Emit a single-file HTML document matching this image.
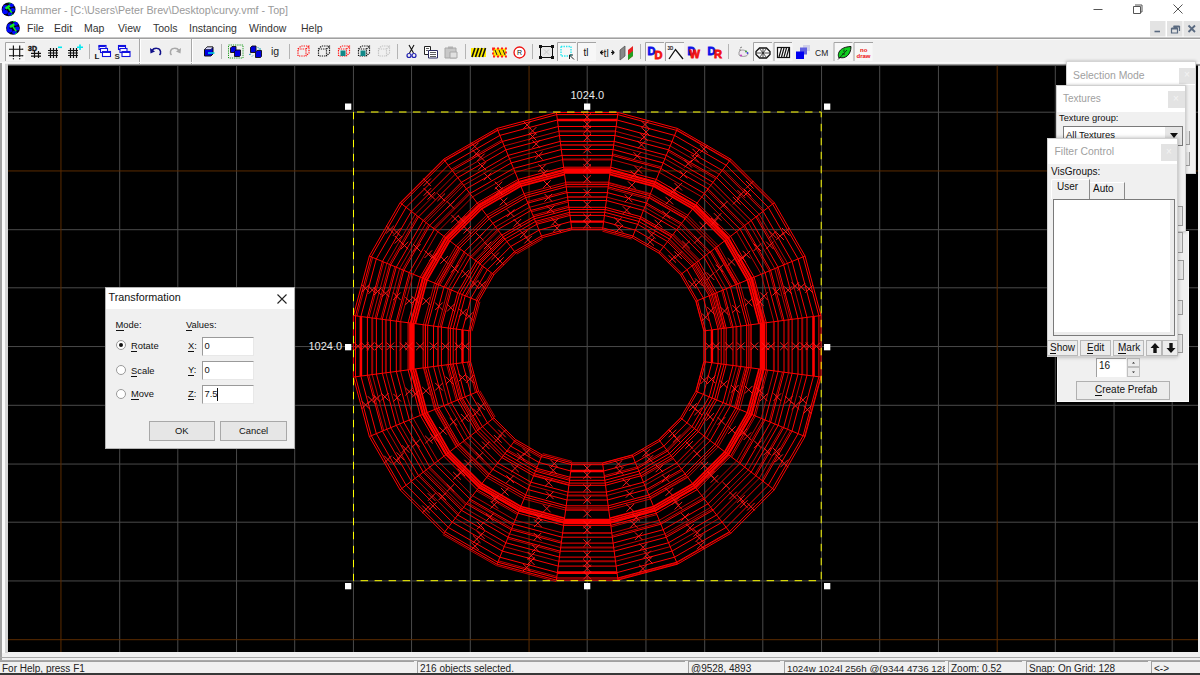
<!DOCTYPE html>
<html><head><meta charset="utf-8">
<style>
*{box-sizing:border-box}
html,body{margin:0;padding:0}
body{width:1200px;height:675px;overflow:hidden;position:relative;background:#f0f0f0;font-family:"Liberation Sans",sans-serif;}
.a{position:absolute}
.t{position:absolute;white-space:pre;line-height:1}
.btn{position:absolute;background:#e1e1e1;border:1px solid #adadad;}
.xb{position:absolute;background:#e3e3e3}
.sunk{position:absolute;border-top:1px solid #a0a0a0;border-left:1px solid #a0a0a0;border-right:1px solid #fff;border-bottom:1px solid #fff}
.pressed{position:absolute;background:#f7f7f7;border-top:1px solid #9a9a9a;border-left:1px solid #9a9a9a;}
.sep{position:absolute;top:44px;width:1px;height:17px;background:#a8a8a8;border-right:1px solid #fff}
.ic{position:absolute;top:43px}
.sb{position:absolute;top:661px;height:12px;padding-top:1px;border-top:1px solid #a0a0a0;border-left:1px solid #a0a0a0;font-size:10px;color:#222;padding-left:2px;line-height:11px;white-space:pre;overflow:hidden}
</style></head>
<body>
<!-- title bar -->
<div class="a" style="left:0;top:0;width:1200px;height:37px;background:#fff"></div>
<div class="a" style="left:0;top:37px;width:1200px;height:1px;background:#c8c8c8"></div>
<div class="a" style="left:0;top:38px;width:1200px;height:1px;background:#a0a0a0"></div>
<div class="a" style="left:0;top:39px;width:1200px;height:1px;background:#fbfbfb"></div>
<div class="t" style="left:20px;top:5px;font-size:10.7px;color:#9a9a9a">Hammer - [C:\Users\Peter Brev\Desktop\curvy.vmf - Top]</div>
<div class="t" style="left:27px;top:23px;font-size:10.5px;color:#333">File</div>
<div class="t" style="left:54px;top:23px;font-size:10.5px;color:#333">Edit</div>
<div class="t" style="left:84px;top:23px;font-size:10.5px;color:#333">Map</div>
<div class="t" style="left:118px;top:23px;font-size:10.5px;color:#333">View</div>
<div class="t" style="left:153px;top:23px;font-size:10.5px;color:#333">Tools</div>
<div class="t" style="left:189px;top:23px;font-size:10.5px;color:#333">Instancing</div>
<div class="t" style="left:249px;top:23px;font-size:10.5px;color:#333">Window</div>
<div class="t" style="left:301px;top:23px;font-size:10.5px;color:#333">Help</div>
<svg class="a" style="left:0;top:38px" width="900" height="27">
<g transform="translate(0,-38)">
<!-- pressed buttons -->
<g fill="#f8f8f8" stroke="#a6a6a6" stroke-width="1">
<path d="M5.5 61V42.5H25" fill="none"/>
</g>
<g fill="#f7f7f7">
<rect x="5" y="42" width="20" height="19"/>
<rect x="557" y="42" width="19" height="19"/><rect x="577" y="42" width="19" height="19"/>
<rect x="645" y="42" width="19" height="19"/><rect x="665" y="42" width="19" height="19"/>
<rect x="753" y="42" width="19" height="19"/><rect x="773.5" y="42" width="19" height="19"/>
<rect x="833.5" y="42" width="19" height="19"/><rect x="853.5" y="42" width="19" height="19"/>
</g>
<path fill="none" stroke="#a4a4a4" stroke-width="1" d="M5.5 61V42.5H25M557.5 61V42.5H576M577.5 61V42.5H596M645.5 61V42.5H664M665.5 61V42.5H684M753.5 61V42.5H772M774 61V42.5H792M834 61V42.5H852.5M854 61V42.5H873"/>
<!-- separators -->
<path fill="none" stroke="#b4b4b4" stroke-width="1" d="M89.5 44V59M221.5 44V59M289.5 44V59M397.5 44V59M465.5 44V59M532.5 44V59M640.5 44V59M728.5 44V59"/>
<path fill="none" stroke="#a8a8a8" stroke-width="1" d="M139.5 39V64M191.5 39V64"/>
<path fill="none" stroke="#ffffff" stroke-width="1" d="M140.5 39V64M192.5 39V64"/>
<!-- 1 grid -->
<g stroke="#111" stroke-width="1.15" fill="none"><path d="M13.4 45.5V57M19.7 45.5V57M9 49.2H23M9 55.7H23"/></g>
<g fill="#222"><circle cx="13.4" cy="58.7" r=".7"/><circle cx="19.7" cy="58.7" r=".7"/><circle cx="22.8" cy="49.2" r=".6"/><circle cx="22.8" cy="55.7" r=".6"/></g>
<!-- 2 3D grid -->
<text x="28" y="50.5" font-family="Liberation Sans" font-weight="bold" font-size="7" fill="#111" stroke="#111" stroke-width=".4">3D</text>
<g stroke="#111" stroke-width="1.2" fill="none"><path d="M34.5 51V58M38.5 51V58M31 53.3H41M31 56.2H41"/></g>
<!-- 3 grid- -->
<g stroke="#111" stroke-width="1.2" fill="none"><path d="M50.5 48V58M53.5 48V58M56.5 48V58M48 50.5H58M48 53H58M48 55.5H58"/></g>
<path d="M58 47.3H62" stroke="#00e8f0" stroke-width="1.6"/>
<!-- 4 grid+ -->
<g stroke="#111" stroke-width="1.2" fill="none"><path d="M70.5 48V58M73.5 48V58M76.5 48V58M68 50.5H78M68 53H78M68 55.5H78"/></g>
<path d="M77 47.3H83M80 44.5V50" stroke="#00e8f0" stroke-width="1.6"/>
<!-- 5 L stacks -->
<g fill="#fff" stroke="#1010e0" stroke-width="1.1">
<rect x="99" y="45.5" width="7" height="4"/><rect x="100.5" y="48.5" width="7" height="4"/><rect x="102.5" y="51.5" width="8" height="5"/></g>
<path d="M98.5 45.5h7v1.5h-7z M102 51.5h8v1.5h-8z" fill="#1010e0"/>
<text x="94.5" y="58.5" font-family="Liberation Sans" font-weight="bold" font-size="8" fill="#111">L</text>
<g fill="#fff" stroke="#1010e0" stroke-width="1.1">
<rect x="118.5" y="45.5" width="7" height="4"/><rect x="120" y="48.5" width="7" height="4"/><rect x="122" y="51.5" width="8" height="5"/></g>
<path d="M118.5 45.5h7v1.5h-7z M122 51.5h8v1.5h-8z" fill="#1010e0"/>
<text x="114.5" y="58.5" font-family="Liberation Sans" font-weight="bold" font-size="8" fill="#333">S</text>
<!-- undo redo -->
<path d="M152 50.5C154 47.5 160 47.5 160.5 51.5C161 53.5 160 54.5 159.5 55" fill="none" stroke="#10108a" stroke-width="1.5"/>
<path d="M150 48L150.5 53.5L155 51.5Z" fill="#10108a"/>
<path d="M179 50.5C177 47.5 171 47.5 170.5 51.5C170 53.5 171 54.5 171.5 55" fill="none" stroke="#a8a8a8" stroke-width="1.5"/>
<path d="M181 48L180.5 53.5L176 51.5Z" fill="#a8a8a8"/>
<!-- cube -->
<path d="M204.5 49.5L207 47H213L213 54L211 56H204.5Z" fill="#0000e0" stroke="#111" stroke-width="1"/>
<path d="M204.5 49.5L207 47H213L211 49.5Z" fill="#d8d8ff" stroke="#111" stroke-width=".6"/>
<path d="M208 53H214.5" stroke="#00d8e8" stroke-width="1.5"/>
<!-- group -->
<rect x="228.5" y="45" width="14.5" height="13" fill="none" stroke="#1a9a1a" stroke-width="1" stroke-dasharray="1.2 1"/>
<path d="M230.5 48L232 46.5H236V51.5L235 52.5H230.5Z" fill="#0000e0" stroke="#111" stroke-width=".9"/>
<path d="M234.5 51.5L236 50H240.5V55.5L239.5 56.5H234.5Z" fill="#0000e0" stroke="#111" stroke-width=".9"/>
<!-- ungroup -->
<path d="M250.5 47.5L252 46H256V51.5L255 52.5H250.5Z" fill="#0000e0" stroke="#111" stroke-width=".9"/>
<path d="M255.5 52L257 50.5H261.5V56.5L260.5 57.5H255.5Z" fill="#0000e0" stroke="#111" stroke-width=".9"/>
<path d="M257.5 48L258.5 47M258.5 49H261M249 54.5L251 54M252 56.5L253 55.5" stroke="#20a0b0" stroke-width="1"/>
<!-- ig -->
<text x="271" y="55" font-family="Liberation Sans" font-size="10.5" fill="#222">ig</text>
<!-- dotted cubes -->
<g fill="none" stroke-width="1.2" stroke-dasharray="1.3 1">
<path d="M298 49H306V56H298Z M298 49L301 46H309V53L306 56M306 49L309 46" stroke="#ff1010"/>
<path d="M318.5 49H326.5V56H318.5Z M318.5 49L321.5 46H329.5V53L326.5 56M326.5 49L329.5 46" stroke="#111"/>
<path d="M338.5 49H346.5V56H338.5Z M338.5 49L341.5 46H349.5V53L346.5 56M346.5 49L349.5 46" stroke="#ff1010"/>
<path d="M358.5 49H366.5V56H358.5Z M358.5 49L361.5 46H369.5V53L366.5 56M366.5 49L369.5 46" stroke="#111"/>
<path d="M378.5 49H386.5V56H378.5Z M378.5 49L381.5 46H389.5V53L386.5 56M386.5 49L389.5 46" stroke="#c0c0c0"/>
</g>
<rect x="340.5" y="50.5" width="5" height="5.5" fill="#108888"/>
<rect x="360.5" y="50.5" width="5" height="5.5" fill="#108888"/>
<!-- scissors -->
<path d="M409 45L413.5 53M414 45L409.5 53" stroke="#111" stroke-width="1.1"/>
<circle cx="409" cy="55.5" r="2" fill="none" stroke="#2020b0" stroke-width="1.2"/>
<circle cx="414" cy="55.5" r="2" fill="none" stroke="#2020b0" stroke-width="1.2"/>
<!-- copy -->
<path d="M424.5 46.5H430.5V54.5H424.5Z" fill="#fff" stroke="#222" stroke-width="1"/>
<path d="M428.5 50.5H437.5V58H428.5Z" fill="#fff" stroke="#2a2a60" stroke-width="1"/>
<path d="M430 52.5H436M430 54.5H436M430 56.5H436M426 48.5H429M426 50.5H428" stroke="#333" stroke-width=".8"/>
<!-- paste faded -->
<path d="M445 48H456V58H445Z" fill="#c8c8c8" stroke="#a8a8a8" stroke-width="1"/>
<path d="M448 46.5H453V49H448Z" fill="#b0b0b0"/>
<path d="M450 52H457V58H450Z" fill="#e0e0e0" stroke="#a8a8a8" stroke-width="1"/>
<!-- hazard -->
<g transform="translate(471,48)"><rect x="0" y="0" width="15" height="9" fill="#ffee00"/>
<path d="M1 9L4 0M4.5 9L7.5 0M8 9L11 0M11.5 9L14.5 0" stroke="#111" stroke-width="1.6"/></g>
<!-- red/yellow -->
<rect x="493" y="48.5" width="13" height="8" fill="#ffe000" stroke="#ff1a1a" stroke-width="1.8" stroke-dasharray="2 2"/>
<path d="M495 50L497 55M499 50L501 55M503 50L505 55" stroke="#222" stroke-width="1"/>
<!-- R circle -->
<circle cx="519.5" cy="52.5" r="5.5" fill="#fff" stroke="#ee1010" stroke-width="1.3"/>
<text x="517" y="55.3" font-family="Liberation Sans" font-size="7" fill="#111">R</text>
<!-- box handles -->
<rect x="540.5" y="46.5" width="12" height="11" fill="#e8e8e8" stroke="#111" stroke-width="1"/>
<path d="M544 49.5L549 54.5M549 49.5L544 54.5" stroke="#c8c8c8" stroke-width="1"/>
<g fill="#111"><rect x="539" y="45" width="3" height="3"/><rect x="551" y="45" width="3" height="3"/><rect x="539" y="56" width="3" height="3"/><rect x="551" y="56" width="3" height="3"/></g>
<!-- dotted select -->
<rect x="561" y="46.5" width="10" height="9.5" fill="none" stroke="#20e8f0" stroke-width="1.3" stroke-dasharray="1.4 1.1"/>
<path d="M569.5 55V59M569.5 55H573M570 55.5L574 59.5" stroke="#222" stroke-width="1"/>
<!-- tl -->
<text x="583.5" y="56" font-family="Liberation Sans" font-size="10" fill="#111">tl</text>
<text x="603.5" y="56.5" font-family="Liberation Sans" font-size="10.5" fill="#222">tl</text>
<path d="M600 52.5H603.5M614.5 52.5H611M600.5 52.5L602.5 50.5M600.5 52.5L602.5 54.5M614 52.5L612 50.5M614 52.5L612 54.5" stroke="#111" stroke-width="1.2"/>
<!-- flip -->
<path d="M620 50L625 46V56L620 60Z" fill="#888" stroke="#555" stroke-width=".8"/>
<path d="M628 50L633 46V56L628 60Z" fill="#e82020"/>
<path d="M628 55L633 51V56L628 60Z" fill="#20a020"/>
<!-- DD -->
<text x="647.5" y="55" font-family="Liberation Sans" font-weight="bold" font-size="11" fill="#1010e8" stroke="#1010e8" stroke-width=".8">D</text>
<text x="654.5" y="59" font-family="Liberation Sans" font-weight="bold" font-size="11" fill="#f01010" stroke="#f01010" stroke-width=".8">D</text>
<!-- clip -->
<text x="667.5" y="49.5" font-family="Liberation Sans" font-weight="bold" font-size="4.5" fill="#111">3D</text>
<path d="M669 59L675.5 49.5L683 59" fill="none" stroke="#111" stroke-width="1.3"/>
<!-- DW DR -->
<text x="687.5" y="54.5" font-family="Liberation Sans" font-weight="bold" font-size="11" fill="#1010e8" stroke="#1010e8" stroke-width=".8">D</text>
<text x="689.5" y="58" font-family="Liberation Sans" font-weight="bold" font-size="11" fill="#f01010" stroke="#f01010" stroke-width=".8">W</text>
<text x="707.5" y="54.5" font-family="Liberation Sans" font-weight="bold" font-size="11" fill="#1010e8" stroke="#1010e8" stroke-width=".8">D</text>
<text x="714" y="58" font-family="Liberation Sans" font-weight="bold" font-size="11" fill="#f01010" stroke="#f01010" stroke-width=".8">R</text>
<!-- paint -->
<path d="M739 52C741 49 744 50 746 51C748 52 749 55 746 56C743 57 740 56 739 55Z" fill="#f0e8f0" stroke="#888" stroke-width=".8"/>
<circle cx="741" cy="55.5" r="1" fill="#c040c0"/><circle cx="746" cy="51.5" r="1" fill="#40a040"/><circle cx="747.5" cy="53" r=".9" fill="#4040e0"/>
<path d="M740 48L742 47M739 50H741" stroke="#666" stroke-width=".8"/>
<!-- octagon -->
<path d="M759.5 48H766.5L770 51.5V54.5L766.5 58H759.5L756 54.5V51.5Z" fill="#f8f8f8" stroke="#111" stroke-width="1.3"/>
<path d="M763 48.5V57.5M756.5 53H769.5M759.5 48.5L763 53L766.5 48.5M759.5 57.5L763 53L766.5 57.5" fill="none" stroke="#222" stroke-width=".8"/>
<!-- stripes -->
<rect x="777.5" y="47.5" width="12" height="10" fill="#fff" stroke="#111" stroke-width="1.2"/>
<path d="M779 57L781.5 48M781.5 57L784 48M784 57L786.5 48M786.5 57L789 48" stroke="#111" stroke-width="1.2"/>
<!-- blue squares -->
<rect x="803" y="45" width="7" height="6" fill="#d0d0e8"/>
<rect x="800" y="47.5" width="7" height="7" fill="#6060e0"/>
<rect x="796" y="51.5" width="8" height="7.5" fill="#0000f0"/>
<!-- CM -->
<text x="815" y="55.5" font-family="Liberation Sans" font-size="8.5" fill="#222">CM</text>
<!-- leaf -->
<path d="M839 58C837 54 839 47 851 46.5C851 55 845 59 840 57.5Z" fill="#10d020" stroke="#111" stroke-width="1"/>
<path d="M838 59.5L847 50M842 54H845M844 52V49.5" fill="none" stroke="#111" stroke-width=".8"/>
<!-- nodraw -->
<text x="860" y="51.5" font-family="Liberation Sans" font-weight="bold" font-size="6" fill="#ee1010">no</text>
<text x="856.5" y="58" font-family="Liberation Sans" font-weight="bold" font-size="6" fill="#ee1010">draw</text>
</g>
</svg>

<!-- title icon + window controls -->
<svg class="a" style="left:0;top:0" width="30" height="40">
<defs><g id="globe">
<circle cx="0" cy="0" r="6.9" fill="#050520"/>
<ellipse cx="-3.2" cy="-2.5" rx="2.6" ry="2" fill="#0008ff"/>
<ellipse cx="2.5" cy="-4" rx="2.6" ry="1.8" fill="#0008ff"/>
<ellipse cx="4" cy="0.5" rx="2.4" ry="2" fill="#0008ff"/>
<ellipse cx="-3.5" cy="2.5" rx="2.8" ry="2" fill="#0008ff"/>
<ellipse cx="1.5" cy="4.5" rx="2.5" ry="1.8" fill="#0008ff"/>
<ellipse cx="-5" cy="-0.2" rx="1.3" ry="1.8" fill="#0008ff"/>
<path d="M-3.8 -1.8L0.5 -4.6L2 -2.8L-2.2 0.2Z" fill="#10ee20"/>
<path d="M-0.5 -2L3.2 3.4" stroke="#10ee20" stroke-width="1.6"/>
<path d="M0 -6.6L2 -6.2M2 6.2L4 5" stroke="#10ee20" stroke-width="1"/>
</g></defs>
<use href="#globe" x="8.6" y="9.4"/>
<use href="#globe" x="13" y="27.9"/>
</svg>
<svg class="a" style="left:1085px;top:0" width="115" height="38">
<path d="M8.5 9.5H17.5" stroke="#555" stroke-width="1"/>
<path d="M48.5 6.5H55.5V13.5H48.5Z M50 5H57V12H55.5" fill="none" stroke="#555" stroke-width="1"/>
<path d="M88.5 4.5L97.5 13.5M97.5 4.5L88.5 13.5" stroke="#555" stroke-width="1"/>
<rect x="65" y="21" width="15.5" height="15.5" fill="#e3e3e3"/>
<rect x="82" y="21" width="15.5" height="15.5" fill="#e3e3e3"/>
<rect x="98.5" y="21" width="16.5" height="15.5" fill="#e3e3e3"/>
<path d="M69.5 31.5H75" stroke="#5a6a80" stroke-width="1.6"/>
<path d="M86.5 28.5H92.5V33H86.5Z M88.5 26.5H94.5V31" fill="none" stroke="#5a6a80" stroke-width="1.2"/>
<path d="M86.5 28.5H92.5M88.5 26.5H94.5" stroke="#5a6a80" stroke-width="1.8"/>
<path d="M103.5 25.5L110 32M110 25.5L103.5 32" stroke="#5a6a80" stroke-width="1.8"/>
</svg>

<!-- viewport -->
<div class="a" style="left:0;top:63px;width:2px;height:598px;background:#a0a0a0"></div>
<div class="a" style="left:2px;top:63px;width:3px;height:590px;background:#fafafa"></div>
<div class="a" style="left:5px;top:64px;width:3px;height:589px;background:#d4d4d4"></div>
<div class="a" style="left:8px;top:64px;width:1192px;height:1.5px;background:#9a9a9a"></div>
<div class="a" style="left:0;top:62px;width:1200px;height:1px;background:#fafafa"></div>
<svg width="1200" height="675" style="position:absolute;left:0;top:0">
<defs><clipPath id="vp"><rect x="8" y="65.5" width="1190" height="586.5"/></clipPath></defs>
<rect x="8" y="65.5" width="1190" height="586.5" fill="#000"/>
<g clip-path="url(#vp)" fill="none">
<path d="M119.69 65.5V652M177.81 65.5V652M236.56 65.5V652M294.69 65.5V652M353.44 65.5V652M411.56 65.5V652M470.31 65.5V652M587.19 65.5V652M645.94 65.5V652M704.69 65.5V652M762.81 65.5V652M821.56 65.5V652M879.69 65.5V652M938.44 65.5V652M1055.31 65.5V652M1114.06 65.5V652M1172.19 65.5V652M8 112.19H1198M8 229.69H1198M8 287.81H1198M8 346.56H1198M8 405.31H1198M8 464.06H1198M8 522.19H1198M8 580.94H1198" stroke="#4a4a4a" stroke-width="1"/>
<path d="M60.94 65.5V652M529.06 65.5V652M997.19 65.5V652M8 170.94H1198M8 639.69H1198" stroke="#5c2c00" stroke-width="1"/>
</g></svg>
<svg width="1200" height="675" style="position:absolute;left:0;top:0">
<g fill="none" stroke-linecap="butt">
<path d="M558.89 131.30L615.51 131.30M560.70 145.00L613.70 145.00M562.62 159.60L611.78 159.60M565.64 182.50L608.76 182.50M567.56 197.10L606.84 197.10M802.20 317.99L802.20 374.61M788.50 319.80L788.50 372.80M773.90 321.72L773.90 370.88M751.00 324.74L751.00 367.86M736.40 326.66L736.40 365.94M615.51 561.30L558.89 561.30M613.70 547.60L560.70 547.60M611.78 533.00L562.62 533.00M608.76 510.10L565.64 510.10M606.84 495.50L567.56 495.50M372.20 374.61L372.20 317.99M385.90 372.80L385.90 319.80M400.50 370.88L400.50 321.72M423.40 367.86L423.40 324.74M438.00 365.94L438.00 326.66" stroke="#a00000" stroke-width="2"/>
<path d="M615.51 131.30L670.19 145.95M613.70 145.00L664.90 158.72M611.78 159.60L659.26 172.32M608.76 182.50L650.42 193.66M606.84 197.10L644.79 207.27M612.53 153.90L661.46 167.01M608.69 183.10L650.19 194.22M608.00 188.30L648.19 199.07M602.35 231.20L631.63 239.04M670.19 145.95L719.21 174.26M664.90 158.72L710.80 185.22M659.26 172.32L701.84 196.90M650.42 193.66L687.78 215.23M644.79 207.27L678.81 226.91M676.86 129.83L729.84 160.41M667.99 151.26L715.71 178.82M649.03 197.02L685.57 218.11M645.95 204.47L680.65 224.51M640.27 218.17L671.63 236.27M719.21 174.26L759.24 214.29M710.80 185.22L748.28 222.70M701.84 196.90L736.60 231.66M687.78 215.23L718.27 245.72M678.81 226.91L706.59 254.69M729.84 160.41L773.09 203.66M723.08 169.22L764.28 210.42M707.12 190.02L743.48 226.38M696.25 204.18L729.32 237.25M694.90 205.95L727.55 238.60M680.65 224.51L708.99 252.85M673.47 233.87L699.63 260.03M668.56 240.27L693.23 264.94M658.98 252.76L680.74 274.52M759.24 214.29L787.55 263.31M748.28 222.70L774.78 268.60M736.60 231.66L761.18 274.24M718.27 245.72L739.84 283.08M706.59 254.69L726.23 288.71M757.08 215.94L785.03 264.36M743.48 226.38L769.19 270.92M715.39 247.93L736.48 284.47M716.03 247.44L737.23 284.16M711.39 251.00L731.82 286.40M695.47 263.22L713.28 294.08M693.15 265.00L710.58 295.20M787.55 263.31L802.20 317.99M774.78 268.60L788.50 319.80M761.18 274.24L773.90 321.72M739.84 283.08L751.00 324.74M726.23 288.71L736.40 326.66M776.74 267.79L790.60 319.52M769.19 270.92L782.50 320.59M752.70 277.75L764.80 322.92M750.65 278.60L762.60 323.21M721.67 290.60L731.50 327.30M715.33 293.23L724.70 328.20M713.47 294.00L722.70 328.46M710.58 295.20L719.60 328.87M696.13 301.18L704.10 330.91M802.20 374.61L787.55 429.29M788.50 372.80L774.78 424.00M773.90 370.88L761.18 418.36M751.00 367.86L739.84 409.52M736.40 365.94L726.23 403.89M820.40 377.00L804.51 436.31M782.50 372.01L769.19 421.68M767.80 370.08L755.49 416.01M747.40 367.39L736.48 408.13M745.20 367.10L734.43 407.29M739.40 366.34L729.03 405.05M704.10 361.69L696.13 391.42M787.55 429.29L759.24 478.31M774.78 424.00L748.28 469.90M761.18 418.36L736.60 460.94M739.84 409.52L718.27 446.88M726.23 403.89L706.59 437.91M790.62 430.56L761.88 480.34M782.24 427.09L754.68 474.81M763.69 419.41L738.76 462.59M755.49 416.01L731.72 457.19M759.24 478.31L719.21 518.34M748.28 469.90L710.80 507.38M736.60 460.94L701.84 495.70M718.27 446.88L687.78 477.37M706.59 437.91L678.81 465.69M729.32 455.35L696.25 488.42M690.75 425.75L666.65 449.85M680.74 418.08L658.98 439.84M719.21 518.34L670.19 546.65M710.80 507.38L664.90 533.88M701.84 495.70L659.26 520.28M687.78 477.37L650.42 498.94M678.81 465.69L644.79 485.33M729.84 532.19L676.86 562.77M712.09 509.06L665.71 535.84M703.49 497.86L660.31 522.79M687.41 476.89L650.19 498.38M682.50 470.49L647.10 490.92M673.47 458.73L641.43 477.23M666.65 449.85L637.15 466.88M670.19 546.65L615.51 561.30M664.90 533.88L613.70 547.60M659.26 520.28L611.78 533.00M650.42 498.94L608.76 510.10M644.79 485.33L606.84 495.50M676.86 562.77L617.78 578.60M677.21 563.61L617.90 579.50M660.31 522.79L612.13 535.70M656.91 514.59L610.98 526.90M654.90 509.75L610.29 521.70M637.15 466.88L604.24 475.70M632.32 455.23L602.59 463.20M558.89 561.30L504.21 546.65M560.70 547.60L509.50 533.88M562.62 533.00L515.14 520.28M565.64 510.10L523.98 498.94M567.56 495.50L529.61 485.33M556.22 581.60L496.38 565.56M556.89 576.50L498.35 560.81M560.03 552.70L507.53 538.63M561.49 541.60L511.82 528.29M564.11 521.70L519.50 509.75M568.99 484.60L533.82 475.18M569.76 478.80L536.06 469.77M572.05 461.40L542.77 453.56M504.21 546.65L455.19 518.34M509.50 533.88L463.60 507.38M515.14 520.28L472.56 495.70M523.98 498.94L486.62 477.37M529.61 485.33L495.59 465.69M496.38 565.56L442.72 534.59M511.82 528.29L467.28 502.58M512.94 525.59L469.06 500.26M517.49 514.59L476.31 490.82M519.50 509.75L479.50 486.65M537.25 466.88L507.75 449.85M540.92 458.03L513.58 442.24M455.19 518.34L415.16 478.31M463.60 507.38L426.12 469.90M472.56 495.70L437.80 460.94M486.62 477.37L456.13 446.88M495.59 465.69L467.81 437.91M458.69 513.78L419.72 474.81M462.31 509.06L424.44 471.19M465.44 504.98L428.52 468.06M488.83 474.49L459.01 444.67M491.90 470.49L463.01 441.60M415.16 478.31L386.85 429.29M426.12 469.90L399.62 424.00M437.80 460.94L413.22 418.36M456.13 446.88L434.56 409.52M467.81 437.91L448.17 403.89M456.61 446.51L435.12 409.29M458.37 445.16L437.17 408.44M478.93 429.38L461.12 398.52M495.10 416.97L479.94 390.73M386.85 429.29L372.20 374.61M399.62 424.00L385.90 372.80M413.22 418.36L400.50 370.88M434.56 409.52L423.40 367.86M448.17 403.89L438.00 365.94M383.78 430.56L368.90 375.04M435.12 409.29L424.00 367.79M456.27 400.53L446.70 364.80M460.93 398.60L451.70 364.14M475.47 392.58L467.30 362.09M372.20 317.99L386.85 263.31M385.90 319.80L399.62 268.60M400.50 321.72L413.22 274.24M423.40 324.74L434.56 283.08M438.00 326.66L448.17 288.71M357.00 315.99L372.69 257.45M368.90 317.56L383.78 262.04M374.90 318.35L389.37 264.36M380.80 319.13L394.87 266.63M388.90 320.19L402.41 269.76M397.80 321.37L410.71 273.19M439.90 326.91L449.94 289.44M472.10 331.15L479.94 301.87M386.85 263.31L415.16 214.29M399.62 268.60L426.12 222.70M413.22 274.24L437.80 231.66M434.56 283.08L456.13 245.72M448.17 288.71L467.81 254.69M389.37 264.36L417.32 215.94M402.41 269.76L428.52 224.54M421.70 277.75L445.08 237.25M437.92 284.47L459.01 247.93M439.97 285.31L460.77 249.29M445.37 287.55L465.41 252.85M466.62 296.35L483.65 266.85M475.47 300.02L491.26 272.68M415.16 214.29L455.19 174.26M426.12 222.70L463.60 185.22M437.80 231.66L472.56 196.90M456.13 245.72L486.62 215.23M467.81 254.69L495.59 226.91M400.59 203.11L444.01 159.69M424.44 221.41L462.31 183.54M433.24 228.16L469.06 192.34M445.08 237.25L478.15 204.18M446.85 238.60L479.50 205.95M471.73 257.70L498.60 230.83M474.77 260.03L500.93 233.87M478.93 263.22L504.12 238.03M478.77 263.10L504.00 237.87M492.70 273.78L514.68 251.80M455.19 174.26L504.21 145.95M463.60 185.22L509.50 158.72M472.56 196.90L515.14 172.32M486.62 215.23L523.98 193.66M495.59 226.91L529.61 207.27M444.56 160.41L497.54 129.83M451.32 169.22L501.78 140.08M478.15 204.18L518.65 180.80M479.50 205.95L519.50 182.85M516.53 254.20L542.77 239.04M504.21 145.95L558.89 131.30M509.50 158.72L560.70 145.00M515.14 172.32L562.62 159.60M523.98 193.66L565.64 182.50M529.61 207.27L567.56 197.10M527.30 201.68L566.77 191.10M531.50 211.83L568.20 202.00M532.97 215.37L568.70 205.80M536.10 222.92L569.77 213.90" stroke="#d00000" stroke-width="0.9"/>
<path d="M556.42 112.50L617.98 112.50M556.70 114.60L617.70 114.60M558.26 126.50L616.14 126.50M559.45 135.50L614.95 135.50M560.22 141.40L614.18 141.40M561.29 149.50L613.11 149.50M562.07 155.40L612.33 155.40M563.62 167.20L610.78 167.20M563.91 169.40L610.49 169.40M565.91 184.60L608.49 184.60M566.20 186.80L608.20 186.80M566.97 192.60L607.43 192.60M568.01 200.50L606.39 200.50M568.90 207.30L605.50 207.30M569.19 209.50L605.21 209.50M569.56 212.30L604.84 212.30M569.97 215.40L604.43 215.40M571.61 227.90L602.79 227.90M571.85 229.70L602.55 229.70M617.98 112.50L677.44 128.43M617.70 114.60L676.63 130.39M616.14 126.50L672.04 141.48M614.95 135.50L668.57 149.87M614.18 141.40L666.29 155.36M613.11 149.50L663.16 162.91M612.33 155.40L660.88 168.41M610.78 167.20L656.33 179.41M610.49 169.40L655.48 181.46M608.49 184.60L649.61 195.62M608.20 186.80L648.76 197.67M607.43 192.60L646.53 203.07M606.39 200.50L643.48 210.44M605.50 207.30L640.85 216.77M605.21 209.50L640.00 218.82M604.84 212.30L638.92 221.43M604.43 215.40L637.73 224.32M602.79 227.90L632.90 235.97M602.55 229.70L632.21 237.65M616.99 120.00L674.55 135.42M603.62 221.60L635.33 230.10M677.44 128.43L730.76 159.21M676.63 130.39L729.47 160.89M672.04 141.48L722.16 170.42M668.57 149.87L716.63 177.62M666.29 155.36L713.01 182.34M663.16 162.91L708.04 188.82M660.88 168.41L704.42 193.54M656.33 179.41L697.17 202.98M655.48 181.46L695.82 204.74M649.61 195.62L686.49 216.91M648.76 197.67L685.14 218.67M646.53 203.07L681.57 223.31M643.48 210.44L676.72 229.63M640.85 216.77L672.55 235.07M640.00 218.82L671.20 236.83M638.92 221.43L669.48 239.07M637.73 224.32L667.57 241.55M632.90 235.97L659.90 251.56M632.21 237.65L658.79 253.00M674.55 135.42L726.15 165.21M635.33 230.10L663.77 246.52M730.76 159.21L774.29 202.74M729.47 160.89L772.61 204.03M722.16 170.42L763.08 211.34M716.63 177.62L755.88 216.87M713.01 182.34L751.16 220.49M708.04 188.82L744.68 225.46M704.42 193.54L739.96 229.08M697.17 202.98L730.52 236.33M695.82 204.74L728.76 237.68M686.49 216.91L716.59 247.01M685.14 218.67L714.83 248.36M681.57 223.31L710.19 251.93M676.72 229.63L703.87 256.78M672.55 235.07L698.43 260.95M671.20 236.83L696.67 262.30M669.48 239.07L694.43 264.02M667.57 241.55L691.95 265.93M659.90 251.56L681.94 273.60M658.79 253.00L680.50 274.71M726.15 165.21L768.29 207.35M663.77 246.52L686.98 269.73M774.29 202.74L805.07 256.06M772.61 204.03L803.11 256.87M763.08 211.34L792.02 261.46M755.88 216.87L783.63 264.93M751.16 220.49L778.14 267.21M744.68 225.46L770.59 270.34M739.96 229.08L765.09 272.62M730.52 236.33L754.09 277.17M728.76 237.68L752.04 278.02M716.59 247.01L737.88 283.89M714.83 248.36L735.83 284.74M710.19 251.93L730.43 286.97M703.87 256.78L723.06 290.02M698.43 260.95L716.73 292.65M696.67 262.30L714.68 293.50M694.43 264.02L712.07 294.58M691.95 265.93L709.18 295.77M681.94 273.60L697.53 300.60M680.50 274.71L695.85 301.29M768.29 207.35L798.08 258.95M686.98 269.73L703.40 298.17M805.07 256.06L821.00 315.52M803.11 256.87L818.90 315.80M792.02 261.46L807.00 317.36M783.63 264.93L798.00 318.55M778.14 267.21L792.10 319.32M770.59 270.34L784.00 320.39M765.09 272.62L778.10 321.17M754.09 277.17L766.30 322.72M752.04 278.02L764.10 323.01M737.88 283.89L748.90 325.01M735.83 284.74L746.70 325.30M730.43 286.97L740.90 326.07M723.06 290.02L733.00 327.11M716.73 292.65L726.20 328.00M714.68 293.50L724.00 328.29M712.07 294.58L721.20 328.66M709.18 295.77L718.10 329.07M697.53 300.60L705.60 330.71M695.85 301.29L703.80 330.95M798.08 258.95L813.50 316.51M703.40 298.17L711.90 329.88M821.00 315.52L821.00 377.08M818.90 315.80L818.90 376.80M807.00 317.36L807.00 375.24M798.00 318.55L798.00 374.05M792.10 319.32L792.10 373.28M784.00 320.39L784.00 372.21M778.10 321.17L778.10 371.43M766.30 322.72L766.30 369.88M764.10 323.01L764.10 369.59M748.90 325.01L748.90 367.59M746.70 325.30L746.70 367.30M740.90 326.07L740.90 366.53M733.00 327.11L733.00 365.49M726.20 328.00L726.20 364.60M724.00 328.29L724.00 364.31M721.20 328.66L721.20 363.94M718.10 329.07L718.10 363.53M705.60 330.71L705.60 361.89M703.80 330.95L703.80 361.65M821.00 377.08L805.07 436.54M818.90 376.80L803.11 435.73M807.00 375.24L792.02 431.14M798.00 374.05L783.63 427.67M792.10 373.28L778.14 425.39M784.00 372.21L770.59 422.26M778.10 371.43L765.09 419.98M766.30 369.88L754.09 415.43M764.10 369.59L752.04 414.58M748.90 367.59L737.88 408.71M746.70 367.30L735.83 407.86M740.90 366.53L730.43 405.63M733.00 365.49L723.06 402.58M726.20 364.60L716.73 399.95M724.00 364.31L714.68 399.10M721.20 363.94L712.07 398.02M718.10 363.53L709.18 396.83M705.60 361.89L697.53 392.00M703.80 361.65L695.85 391.31M813.50 376.09L798.08 433.65M711.90 362.72L703.40 394.43M805.07 436.54L774.29 489.86M803.11 435.73L772.61 488.57M792.02 431.14L763.08 481.26M783.63 427.67L755.88 475.73M778.14 425.39L751.16 472.11M770.59 422.26L744.68 467.14M765.09 419.98L739.96 463.52M754.09 415.43L730.52 456.27M752.04 414.58L728.76 454.92M737.88 408.71L716.59 445.59M735.83 407.86L714.83 444.24M730.43 405.63L710.19 440.67M723.06 402.58L703.87 435.82M716.73 399.95L698.43 431.65M714.68 399.10L696.67 430.30M712.07 398.02L694.43 428.58M709.18 396.83L691.95 426.67M697.53 392.00L681.94 419.00M695.85 391.31L680.50 417.89M798.08 433.65L768.29 485.25M703.40 394.43L686.98 422.87M774.29 489.86L730.76 533.39M772.61 488.57L729.47 531.71M763.08 481.26L722.16 522.18M755.88 475.73L716.63 514.98M751.16 472.11L713.01 510.26M744.68 467.14L708.04 503.78M739.96 463.52L704.42 499.06M730.52 456.27L697.17 489.62M728.76 454.92L695.82 487.86M716.59 445.59L686.49 475.69M714.83 444.24L685.14 473.93M710.19 440.67L681.57 469.29M703.87 435.82L676.72 462.97M698.43 431.65L672.55 457.53M696.67 430.30L671.20 455.77M694.43 428.58L669.48 453.53M691.95 426.67L667.57 451.05M681.94 419.00L659.90 441.04M680.50 417.89L658.79 439.60M768.29 485.25L726.15 527.39M686.98 422.87L663.77 446.08M730.76 533.39L677.44 564.17M729.47 531.71L676.63 562.21M722.16 522.18L672.04 551.12M716.63 514.98L668.57 542.73M713.01 510.26L666.29 537.24M708.04 503.78L663.16 529.69M704.42 499.06L660.88 524.19M697.17 489.62L656.33 513.19M695.82 487.86L655.48 511.14M686.49 475.69L649.61 496.98M685.14 473.93L648.76 494.93M681.57 469.29L646.53 489.53M676.72 462.97L643.48 482.16M672.55 457.53L640.85 475.83M671.20 455.77L640.00 473.78M669.48 453.53L638.92 471.17M667.57 451.05L637.73 468.28M659.90 441.04L632.90 456.63M658.79 439.60L632.21 454.95M726.15 527.39L674.55 557.18M663.77 446.08L635.33 462.50M677.44 564.17L617.98 580.10M676.63 562.21L617.70 578.00M672.04 551.12L616.14 566.10M668.57 542.73L614.95 557.10M666.29 537.24L614.18 551.20M663.16 529.69L613.11 543.10M660.88 524.19L612.33 537.20M656.33 513.19L610.78 525.40M655.48 511.14L610.49 523.20M649.61 496.98L608.49 508.00M648.76 494.93L608.20 505.80M646.53 489.53L607.43 500.00M643.48 482.16L606.39 492.10M640.85 475.83L605.50 485.30M640.00 473.78L605.21 483.10M638.92 471.17L604.84 480.30M637.73 468.28L604.43 477.20M632.90 456.63L602.79 464.70M632.21 454.95L602.55 462.90M674.55 557.18L616.99 572.60M635.33 462.50L603.62 471.00M617.98 580.10L556.42 580.10M617.70 578.00L556.70 578.00M616.14 566.10L558.26 566.10M614.95 557.10L559.45 557.10M614.18 551.20L560.22 551.20M613.11 543.10L561.29 543.10M612.33 537.20L562.07 537.20M610.78 525.40L563.62 525.40M610.49 523.20L563.91 523.20M608.49 508.00L565.91 508.00M608.20 505.80L566.20 505.80M607.43 500.00L566.97 500.00M606.39 492.10L568.01 492.10M605.50 485.30L568.90 485.30M605.21 483.10L569.19 483.10M604.84 480.30L569.56 480.30M604.43 477.20L569.97 477.20M602.79 464.70L571.61 464.70M602.55 462.90L571.85 462.90M556.42 580.10L496.96 564.17M556.70 578.00L497.77 562.21M558.26 566.10L502.36 551.12M559.45 557.10L505.83 542.73M560.22 551.20L508.11 537.24M561.29 543.10L511.24 529.69M562.07 537.20L513.52 524.19M563.62 525.40L518.07 513.19M563.91 523.20L518.92 511.14M565.91 508.00L524.79 496.98M566.20 505.80L525.64 494.93M566.97 500.00L527.87 489.53M568.01 492.10L530.92 482.16M568.90 485.30L533.55 475.83M569.19 483.10L534.40 473.78M569.56 480.30L535.48 471.17M569.97 477.20L536.67 468.28M571.61 464.70L541.50 456.63M571.85 462.90L542.19 454.95M557.41 572.60L499.85 557.18M570.78 471.00L539.07 462.50M496.96 564.17L443.64 533.39M497.77 562.21L444.93 531.71M502.36 551.12L452.24 522.18M505.83 542.73L457.77 514.98M508.11 537.24L461.39 510.26M511.24 529.69L466.36 503.78M513.52 524.19L469.98 499.06M518.07 513.19L477.23 489.62M518.92 511.14L478.58 487.86M524.79 496.98L487.91 475.69M525.64 494.93L489.26 473.93M527.87 489.53L492.83 469.29M530.92 482.16L497.68 462.97M533.55 475.83L501.85 457.53M534.40 473.78L503.20 455.77M535.48 471.17L504.92 453.53M536.67 468.28L506.83 451.05M541.50 456.63L514.50 441.04M542.19 454.95L515.61 439.60M499.85 557.18L448.25 527.39M539.07 462.50L510.63 446.08M443.64 533.39L400.11 489.86M444.93 531.71L401.79 488.57M452.24 522.18L411.32 481.26M457.77 514.98L418.52 475.73M461.39 510.26L423.24 472.11M466.36 503.78L429.72 467.14M469.98 499.06L434.44 463.52M477.23 489.62L443.88 456.27M478.58 487.86L445.64 454.92M487.91 475.69L457.81 445.59M489.26 473.93L459.57 444.24M492.83 469.29L464.21 440.67M497.68 462.97L470.53 435.82M501.85 457.53L475.97 431.65M503.20 455.77L477.73 430.30M504.92 453.53L479.97 428.58M506.83 451.05L482.45 426.67M514.50 441.04L492.46 419.00M515.61 439.60L493.90 417.89M448.25 527.39L406.11 485.25M510.63 446.08L487.42 422.87M400.11 489.86L369.33 436.54M401.79 488.57L371.29 435.73M411.32 481.26L382.38 431.14M418.52 475.73L390.77 427.67M423.24 472.11L396.26 425.39M429.72 467.14L403.81 422.26M434.44 463.52L409.31 419.98M443.88 456.27L420.31 415.43M445.64 454.92L422.36 414.58M457.81 445.59L436.52 408.71M459.57 444.24L438.57 407.86M464.21 440.67L443.97 405.63M470.53 435.82L451.34 402.58M475.97 431.65L457.67 399.95M477.73 430.30L459.72 399.10M479.97 428.58L462.33 398.02M482.45 426.67L465.22 396.83M492.46 419.00L476.87 392.00M493.90 417.89L478.55 391.31M406.11 485.25L376.32 433.65M487.42 422.87L471.00 394.43M369.33 436.54L353.40 377.08M371.29 435.73L355.50 376.80M382.38 431.14L367.40 375.24M390.77 427.67L376.40 374.05M396.26 425.39L382.30 373.28M403.81 422.26L390.40 372.21M409.31 419.98L396.30 371.43M420.31 415.43L408.10 369.88M422.36 414.58L410.30 369.59M436.52 408.71L425.50 367.59M438.57 407.86L427.70 367.30M443.97 405.63L433.50 366.53M451.34 402.58L441.40 365.49M457.67 399.95L448.20 364.60M459.72 399.10L450.40 364.31M462.33 398.02L453.20 363.94M465.22 396.83L456.30 363.53M476.87 392.00L468.80 361.89M478.55 391.31L470.60 361.65M376.32 433.65L360.90 376.09M471.00 394.43L462.50 362.72M353.40 377.08L353.40 315.52M355.50 376.80L355.50 315.80M367.40 375.24L367.40 317.36M376.40 374.05L376.40 318.55M382.30 373.28L382.30 319.32M390.40 372.21L390.40 320.39M396.30 371.43L396.30 321.17M408.10 369.88L408.10 322.72M410.30 369.59L410.30 323.01M425.50 367.59L425.50 325.01M427.70 367.30L427.70 325.30M433.50 366.53L433.50 326.07M441.40 365.49L441.40 327.11M448.20 364.60L448.20 328.00M450.40 364.31L450.40 328.29M453.20 363.94L453.20 328.66M456.30 363.53L456.30 329.07M468.80 361.89L468.80 330.71M470.60 361.65L470.60 330.95M353.40 315.52L369.33 256.06M355.50 315.80L371.29 256.87M367.40 317.36L382.38 261.46M376.40 318.55L390.77 264.93M382.30 319.32L396.26 267.21M390.40 320.39L403.81 270.34M396.30 321.17L409.31 272.62M408.10 322.72L420.31 277.17M410.30 323.01L422.36 278.02M425.50 325.01L436.52 283.89M427.70 325.30L438.57 284.74M433.50 326.07L443.97 286.97M441.40 327.11L451.34 290.02M448.20 328.00L457.67 292.65M450.40 328.29L459.72 293.50M453.20 328.66L462.33 294.58M456.30 329.07L465.22 295.77M468.80 330.71L476.87 300.60M470.60 330.95L478.55 301.29M360.90 316.51L376.32 258.95M462.50 329.88L471.00 298.17M369.33 256.06L400.11 202.74M371.29 256.87L401.79 204.03M382.38 261.46L411.32 211.34M390.77 264.93L418.52 216.87M396.26 267.21L423.24 220.49M403.81 270.34L429.72 225.46M409.31 272.62L434.44 229.08M420.31 277.17L443.88 236.33M422.36 278.02L445.64 237.68M436.52 283.89L457.81 247.01M438.57 284.74L459.57 248.36M443.97 286.97L464.21 251.93M451.34 290.02L470.53 256.78M457.67 292.65L475.97 260.95M459.72 293.50L477.73 262.30M462.33 294.58L479.97 264.02M465.22 295.77L482.45 265.93M476.87 300.60L492.46 273.60M478.55 301.29L493.90 274.71M376.32 258.95L406.11 207.35M471.00 298.17L487.42 269.73M400.11 202.74L443.64 159.21M401.79 204.03L444.93 160.89M411.32 211.34L452.24 170.42M418.52 216.87L457.77 177.62M423.24 220.49L461.39 182.34M429.72 225.46L466.36 188.82M434.44 229.08L469.98 193.54M443.88 236.33L477.23 202.98M445.64 237.68L478.58 204.74M457.81 247.01L487.91 216.91M459.57 248.36L489.26 218.67M464.21 251.93L492.83 223.31M470.53 256.78L497.68 229.63M475.97 260.95L501.85 235.07M477.73 262.30L503.20 236.83M479.97 264.02L504.92 239.07M482.45 265.93L506.83 241.55M492.46 273.60L514.50 251.56M493.90 274.71L515.61 253.00M406.11 207.35L448.25 165.21M487.42 269.73L510.63 246.52M443.64 159.21L496.96 128.43M444.93 160.89L497.77 130.39M452.24 170.42L502.36 141.48M457.77 177.62L505.83 149.87M461.39 182.34L508.11 155.36M466.36 188.82L511.24 162.91M469.98 193.54L513.52 168.41M477.23 202.98L518.07 179.41M478.58 204.74L518.92 181.46M487.91 216.91L524.79 195.62M489.26 218.67L525.64 197.67M492.83 223.31L527.87 203.07M497.68 229.63L530.92 210.44M501.85 235.07L533.55 216.77M503.20 236.83L534.40 218.82M504.92 239.07L535.48 221.43M506.83 241.55L536.67 224.32M514.50 251.56L541.50 235.97M515.61 253.00L542.19 237.65M448.25 165.21L499.85 135.42M510.63 246.52L539.07 230.10M496.96 128.43L556.42 112.50M497.77 130.39L556.70 114.60M502.36 141.48L558.26 126.50M505.83 149.87L559.45 135.50M508.11 155.36L560.22 141.40M511.24 162.91L561.29 149.50M513.52 168.41L562.07 155.40M518.07 179.41L563.62 167.20M518.92 181.46L563.91 169.40M524.79 195.62L565.91 184.60M525.64 197.67L566.20 186.80M527.87 203.07L566.97 192.60M530.92 210.44L568.01 200.50M533.55 216.77L568.90 207.30M534.40 218.82L569.19 209.50M535.48 221.43L569.56 212.30M536.67 224.32L569.97 215.40M541.50 235.97L571.61 227.90M542.19 237.65L571.85 229.70M499.85 135.42L557.41 120.00M539.07 230.10L570.78 221.60" stroke="#ff0000" stroke-width="1"/>
<path d="M557.41 120.00L616.99 120.00M813.50 316.51L813.50 376.09M616.99 572.60L557.41 572.60M360.90 376.09L360.90 316.51" stroke="#ff0000" stroke-width="2.6"/>
<path d="M564.12 171.00L610.28 171.00M762.50 323.22L762.50 369.38M610.28 521.60L564.12 521.60M411.90 369.38L411.90 323.22" stroke="#ff0000" stroke-width="5.5"/>
<path d="M570.78 221.60L603.62 221.60M711.90 329.88L711.90 362.72M603.62 471.00L570.78 471.00M462.50 362.72L462.50 329.88" stroke="#ff0000" stroke-width="2.4"/>
<path d="M609.83 174.40L653.55 186.11M610.11 172.30L654.36 184.16M610.38 170.20L655.17 182.20M653.55 186.11L692.75 208.75M654.36 184.16L694.04 207.07M655.17 182.20L695.33 205.38M692.75 208.75L724.75 240.75M694.04 207.07L726.43 239.46M695.33 205.38L728.12 238.17M724.75 240.75L747.39 279.95M726.43 239.46L749.34 279.14M728.12 238.17L751.30 278.33M747.39 279.95L759.10 323.67M749.34 279.14L761.20 323.39M751.30 278.33L763.30 323.12M759.10 368.93L747.39 412.65M761.20 369.21L749.34 413.46M763.30 369.48L751.30 414.27M747.39 412.65L724.75 451.85M749.34 413.46L726.43 453.14M751.30 414.27L728.12 454.43M724.75 451.85L692.75 483.85M726.43 453.14L694.04 485.53M728.12 454.43L695.33 487.22M692.75 483.85L653.55 506.49M694.04 485.53L654.36 508.44M695.33 487.22L655.17 510.40M653.55 506.49L609.83 518.20M654.36 508.44L610.11 520.30M655.17 510.40L610.38 522.40M564.57 518.20L520.85 506.49M564.29 520.30L520.04 508.44M564.02 522.40L519.23 510.40M520.85 506.49L481.65 483.85M520.04 508.44L480.36 485.53M519.23 510.40L479.07 487.22M481.65 483.85L449.65 451.85M480.36 485.53L447.97 453.14M479.07 487.22L446.28 454.43M449.65 451.85L427.01 412.65M447.97 453.14L425.06 413.46M446.28 454.43L423.10 414.27M427.01 412.65L415.30 368.93M425.06 413.46L413.20 369.21M423.10 414.27L411.10 369.48M415.30 323.67L427.01 279.95M413.20 323.39L425.06 279.14M411.10 323.12L423.10 278.33M427.01 279.95L449.65 240.75M425.06 279.14L447.97 239.46M423.10 278.33L446.28 238.17M449.65 240.75L481.65 208.75M447.97 239.46L480.36 207.07M446.28 238.17L479.07 205.38M481.65 208.75L520.85 186.11M480.36 207.07L520.04 184.16M479.07 205.38L519.23 182.20M520.85 186.11L564.57 174.40M520.04 184.16L564.29 172.30M519.23 182.20L564.02 170.20" stroke="#ff0000" stroke-width="1.7"/>
<path d="M602.55 229.70L617.98 112.50M632.21 237.65L677.44 128.43M658.79 253.00L730.76 159.21M680.50 274.71L774.29 202.74M695.85 301.29L805.07 256.06M703.80 330.95L821.00 315.52M703.80 361.65L821.00 377.08M695.85 391.31L805.07 436.54M680.50 417.89L774.29 489.86M658.79 439.60L730.76 533.39M632.21 454.95L677.44 564.17M602.55 462.90L617.98 580.10M571.85 462.90L556.42 580.10M542.19 454.95L496.96 564.17M515.61 439.60L443.64 533.39M493.90 417.89L400.11 489.86M478.55 391.31L369.33 436.54M470.60 361.65L353.40 377.08M470.60 330.95L353.40 315.52M478.55 301.29L369.33 256.06M493.90 274.71L400.11 202.74M515.61 253.00L443.64 159.21M542.19 237.65L496.96 128.43M571.85 229.70L556.42 112.50" stroke="#ff0000" stroke-width="1"/>
<path d="M583.4 113.3L591.0 120.9M583.4 120.9L591.0 113.3M583.4 120.3L591.0 127.9M583.4 127.9L591.0 120.3M583.4 125.8L591.0 133.4M583.4 133.4L591.0 125.8M583.4 133.9L591.0 141.5M583.4 141.5L591.0 133.9M583.4 145.7L591.0 153.3M583.4 153.3L591.0 145.7M583.4 158.8L591.0 166.4M583.4 166.4L591.0 158.8M583.4 164.3L591.0 171.9M583.4 171.9L591.0 164.3M583.4 175.3L591.0 182.9M583.4 182.9L591.0 175.3M583.4 188.9L591.0 196.5M583.4 196.5L591.0 188.9M583.4 200.7L591.0 208.3M583.4 208.3L591.0 200.7M583.4 213.8L591.0 221.4M583.4 221.4L591.0 213.8M583.4 220.6L591.0 228.2M583.4 228.2L591.0 220.6M641.2 120.7L648.8 128.3M641.2 128.3L648.8 120.7M642.3 128.3L649.9 135.9M642.3 135.9L649.9 128.3M640.1 133.3L647.7 140.9M640.1 140.9L647.7 133.3M637.7 141.1L645.3 148.7M637.7 148.7L645.3 141.1M633.5 152.2L641.1 159.8M633.5 159.8L641.1 152.2M634.6 166.1L642.2 173.7M634.6 173.7L642.2 166.1M630.5 170.6L638.1 178.2M630.5 178.2L638.1 170.6M628.0 181.4L635.6 189.0M628.0 189.0L635.6 181.4M624.8 194.6L632.4 202.2M624.8 202.2L632.4 194.6M622.8 206.3L630.4 213.9M622.8 213.9L630.4 206.3M614.2 217.5L621.8 225.1M614.2 225.1L621.8 217.5M615.5 224.9L623.1 232.5M615.5 232.5L623.1 224.9M700.0 145.2L707.6 152.8M700.0 152.8L707.6 145.2M692.5 148.9L700.1 156.5M692.5 156.5L700.1 148.9M691.0 154.4L698.6 162.0M691.0 162.0L698.6 154.4M684.3 159.9L691.9 167.5M684.3 167.5L691.9 159.9M679.6 170.8L687.2 178.4M679.6 178.4L687.2 170.8M674.4 182.9L682.0 190.5M674.4 190.5L682.0 182.9M669.9 186.7L677.5 194.3M669.9 194.3L677.5 186.7M665.5 196.8L673.1 204.4M665.5 204.4L673.1 196.8M662.4 210.8L670.0 218.4M662.4 218.4L670.0 210.8M654.6 219.8L662.2 227.4M654.6 227.4L662.2 219.8M647.8 231.1L655.4 238.7M647.8 238.7L655.4 231.1M646.4 238.1L654.0 245.7M646.4 245.7L654.0 238.1M745.9 180.9L753.5 188.5M745.9 188.5L753.5 180.9M743.7 188.7L751.3 196.3M743.7 196.3L751.3 188.7M737.5 190.2L745.1 197.8M737.5 197.8L745.1 190.2M732.8 196.9L740.4 204.5M732.8 204.5L740.4 196.9M720.1 200.9L727.7 208.5M720.1 208.5L727.7 200.9M713.8 213.1L721.4 220.7M713.8 220.7L721.4 213.1M710.8 217.9L718.4 225.5M710.8 225.5L718.4 217.9M699.4 222.0L707.0 229.6M699.4 229.6L707.0 222.0M694.0 235.9L701.6 243.5M694.0 243.5L701.6 235.9M682.2 240.8L689.8 248.4M682.2 248.4L689.8 240.8M674.3 251.4L681.9 259.0M674.3 259.0L681.9 251.4M668.4 255.1L676.0 262.7M668.4 262.7L676.0 255.1M781.9 227.9L789.5 235.5M781.9 235.5L789.5 227.9M776.3 232.3L783.9 239.9M776.3 239.9L783.9 232.3M769.0 230.7L776.6 238.3M769.0 238.3L776.6 230.7M766.0 241.6L773.6 249.2M766.0 249.2L773.6 241.6M753.5 243.5L761.1 251.1M753.5 251.1L761.1 243.5M742.6 250.8L750.2 258.4M742.6 258.4L750.2 250.8M738.1 254.0L745.7 261.6M738.1 261.6L745.7 254.0M727.7 258.1L735.3 265.7M727.7 265.7L735.3 258.1M715.7 264.5L723.3 272.1M715.7 272.1L723.3 264.5M706.7 272.4L714.3 280.0M706.7 280.0L714.3 272.4M695.0 278.4L702.6 286.0M695.0 286.0L702.6 278.4M688.4 280.6L696.0 288.2M688.4 288.2L696.0 280.6M805.3 285.2L812.9 292.8M805.3 292.8L812.9 285.2M797.5 283.2L805.1 290.8M797.5 290.8L805.1 283.2M791.5 282.2L799.1 289.8M791.5 289.8L799.1 282.2M784.3 286.4L791.9 294.0M784.3 294.0L791.9 286.4M772.5 287.9L780.1 295.5M772.5 295.5L780.1 287.9M760.1 292.4L767.7 300.0M760.1 300.0L767.7 292.4M756.0 298.2L763.6 305.8M756.0 305.8L763.6 298.2M744.7 298.5L752.3 306.1M744.7 306.1L752.3 298.5M732.4 305.2L740.0 312.8M732.4 312.8L740.0 305.2M720.7 307.2L728.3 314.8M720.7 314.8L728.3 307.2M707.1 306.9L714.7 314.5M707.1 314.5L714.7 306.9M701.8 313.4L709.4 321.0M701.8 321.0L709.4 313.4M812.6 342.5L820.2 350.1M812.6 350.1L820.2 342.5M805.6 342.5L813.2 350.1M805.6 350.1L813.2 342.5M800.1 342.5L807.7 350.1M800.1 350.1L807.7 342.5M792.0 342.5L799.6 350.1M792.0 350.1L799.6 342.5M780.2 342.5L787.8 350.1M780.2 350.1L787.8 342.5M767.1 342.5L774.7 350.1M767.1 350.1L774.7 342.5M761.6 342.5L769.2 350.1M761.6 350.1L769.2 342.5M750.6 342.5L758.2 350.1M750.6 350.1L758.2 342.5M737.0 342.5L744.6 350.1M737.0 350.1L744.6 342.5M725.2 342.5L732.8 350.1M725.2 350.1L732.8 342.5M712.1 342.5L719.7 350.1M712.1 350.1L719.7 342.5M705.3 342.5L712.9 350.1M705.3 350.1L712.9 342.5M803.6 405.9L811.2 413.5M803.6 413.5L811.2 405.9M799.0 396.2L806.6 403.8M799.0 403.8L806.6 396.2M791.7 402.1L799.3 409.7M791.7 409.7L799.3 402.1M785.1 395.9L792.7 403.5M785.1 403.5L792.7 395.9M773.5 393.3L781.1 400.9M773.5 400.9L781.1 393.3M759.9 393.6L767.5 401.2M759.9 401.2L767.5 393.6M756.0 386.8L763.6 394.4M756.0 394.4L763.6 386.8M744.9 385.9L752.5 393.5M744.9 393.5L752.5 385.9M731.0 385.0L738.6 392.6M731.0 392.6L738.6 385.0M720.0 380.5L727.6 388.1M720.0 388.1L727.6 380.5M707.8 375.6L715.4 383.2M707.8 383.2L715.4 375.6M700.5 376.4L708.1 384.0M700.5 384.0L708.1 376.4M780.4 459.7L788.0 467.3M780.4 467.3L788.0 459.7M775.3 454.4L782.9 462.0M775.3 462.0L782.9 454.4M772.8 447.8L780.4 455.4M772.8 455.4L780.4 447.8M763.5 447.7L771.1 455.3M763.5 455.3L771.1 447.7M754.0 440.6L761.6 448.2M754.0 448.2L761.6 440.6M743.6 432.4L751.2 440.0M743.6 440.0L751.2 432.4M739.4 428.7L747.0 436.3M739.4 436.3L747.0 428.7M728.1 426.3L735.7 433.9M728.1 433.9L735.7 426.3M717.6 417.2L725.2 424.8M717.6 424.8L725.2 417.2M706.4 413.1L714.0 420.7M706.4 420.7L714.0 413.1M694.4 407.6L702.0 415.2M694.4 415.2L702.0 407.6M689.1 403.3L696.7 410.9M689.1 410.9L696.7 403.3M747.1 502.9L754.7 510.5M747.1 510.5L754.7 502.9M740.0 500.2L747.6 507.8M740.0 507.8L747.6 500.2M737.1 495.2L744.7 502.8M737.1 502.8L744.7 495.2M729.2 491.7L736.8 499.3M729.2 499.3L736.8 491.7M722.4 481.8L730.0 489.4M722.4 489.4L730.0 481.8M710.6 475.1L718.2 482.7M710.6 482.7L718.2 475.1M707.0 470.9L714.6 478.5M707.0 478.5L714.6 470.9M700.5 461.9L708.1 469.5M700.5 469.5L708.1 461.9M693.2 449.9L700.8 457.5M693.2 457.5L700.8 449.9M685.3 441.1L692.9 448.7M685.3 448.7L692.9 441.1M672.9 435.0L680.5 442.6M672.9 442.6L680.5 435.0M668.6 429.7L676.2 437.3M668.6 437.3L676.2 429.7M697.0 541.6L704.6 549.2M697.0 549.2L704.6 541.6M695.6 534.3L703.2 541.9M695.6 541.9L703.2 534.3M693.5 529.1L701.1 536.7M693.5 536.7L701.1 529.1M686.3 524.0L693.9 531.6M686.3 531.6L693.9 524.0M681.3 513.2L688.9 520.8M681.3 520.8L688.9 513.2M674.6 501.9L682.2 509.5M674.6 509.5L682.2 501.9M671.6 497.3L679.2 504.9M671.6 504.9L679.2 497.3M665.5 488.2L673.1 495.8M665.5 495.8L673.1 488.2M661.9 474.5L669.5 482.1M661.9 482.1L669.5 474.5M655.6 464.6L663.2 472.2M655.6 472.2L663.2 464.6M645.5 455.2L653.1 462.8M645.5 462.8L653.1 455.2M642.5 449.1L650.1 456.7M642.5 456.7L650.1 449.1M639.2 564.8L646.8 572.4M639.2 572.4L646.8 564.8M645.0 556.0L652.6 563.6M645.0 563.6L652.6 556.0M643.3 550.7L650.9 558.3M643.3 558.3L650.9 550.7M639.3 543.5L646.9 551.1M639.3 551.1L646.9 543.5M634.9 532.4L642.5 540.0M634.9 540.0L642.5 532.4M630.0 520.2L637.6 527.8M630.0 527.8L637.6 520.2M632.4 513.8L640.0 521.4M632.4 521.4L640.0 513.8M626.4 504.1L634.0 511.7M626.4 511.7L634.0 504.1M625.8 490.1L633.4 497.7M625.8 497.7L633.4 490.1M622.5 478.8L630.1 486.4M622.5 486.4L630.1 478.8M615.8 467.1L623.4 474.7M615.8 474.7L623.4 467.1M614.7 460.3L622.3 467.9M614.7 467.9L622.3 460.3M583.4 571.7L591.0 579.3M583.4 579.3L591.0 571.7M583.4 564.7L591.0 572.3M583.4 572.3L591.0 564.7M583.4 559.2L591.0 566.8M583.4 566.8L591.0 559.2M583.4 551.1L591.0 558.7M583.4 558.7L591.0 551.1M583.4 539.3L591.0 546.9M583.4 546.9L591.0 539.3M583.4 526.2L591.0 533.8M583.4 533.8L591.0 526.2M583.4 520.7L591.0 528.3M583.4 528.3L591.0 520.7M583.4 509.7L591.0 517.3M583.4 517.3L591.0 509.7M583.4 496.1L591.0 503.7M583.4 503.7L591.0 496.1M583.4 484.3L591.0 491.9M583.4 491.9L591.0 484.3M583.4 471.2L591.0 478.8M583.4 478.8L591.0 471.2M583.4 464.4L591.0 472.0M583.4 472.0L591.0 464.4M522.9 563.6L530.5 571.2M522.9 571.2L530.5 563.6M527.0 557.4L534.6 565.0M527.0 565.0L534.6 557.4M527.5 551.9L535.1 559.5M527.5 559.5L535.1 551.9M531.9 544.6L539.5 552.2M531.9 552.2L539.5 544.6M533.7 532.9L541.3 540.5M533.7 540.5L541.3 532.9M534.0 519.4L541.6 527.0M534.0 527.0L541.6 519.4M534.8 514.0L542.4 521.6M534.8 521.6L542.4 514.0M543.0 504.7L550.6 512.3M543.0 512.3L550.6 504.7M546.0 491.5L553.6 499.1M546.0 499.1L553.6 491.5M544.9 479.0L552.5 486.6M544.9 486.6L552.5 479.0M549.4 466.6L557.0 474.2M549.4 474.2L557.0 466.6M550.5 459.9L558.1 467.5M550.5 467.5L558.1 459.9M471.2 542.4L478.8 550.0M471.2 550.0L478.8 542.4M472.9 535.3L480.5 542.9M472.9 542.9L480.5 535.3M477.0 531.3L484.6 538.9M477.0 538.9L484.6 531.3M476.8 521.8L484.4 529.4M476.8 529.4L484.4 521.8M485.9 513.5L493.5 521.1M485.9 521.1L493.5 513.5M490.5 501.0L498.1 508.6M490.5 508.6L498.1 501.0M491.2 495.0L498.8 502.6M491.2 502.6L498.8 495.0M500.9 487.9L508.5 495.5M500.9 495.5L508.5 487.9M506.3 475.4L513.9 483.0M506.3 483.0L513.9 475.4M511.2 464.6L518.8 472.2M511.2 472.2L518.8 464.6M517.1 452.8L524.7 460.4M517.1 460.4L524.7 452.8M522.8 448.3L530.4 455.9M522.8 455.9L530.4 448.3M422.2 505.5L429.8 513.1M422.2 513.1L429.8 505.5M429.0 502.2L436.6 509.8M429.0 509.8L436.6 502.2M427.8 493.3L435.4 500.9M427.8 500.9L435.4 493.3M438.5 492.6L446.1 500.2M438.5 500.2L446.1 492.6M446.7 484.1L454.3 491.7M446.7 491.7L454.3 484.1M453.2 472.0L460.8 479.6M453.2 479.6L460.8 472.0M457.5 468.6L465.1 476.2M457.5 476.2L465.1 468.6M464.3 459.8L471.9 467.4M464.3 467.4L471.9 459.8M475.7 452.0L483.3 459.6M475.7 459.6L483.3 452.0M482.0 441.6L489.6 449.2M482.0 449.2L489.6 441.6M494.0 435.1L501.6 442.7M494.0 442.7L501.6 435.1M498.2 429.7L505.8 437.3M498.2 437.3L505.8 429.7M384.1 455.7L391.7 463.3M384.1 463.3L391.7 455.7M392.9 457.0L400.5 464.6M392.9 464.6L400.5 457.0M396.6 452.4L404.2 460.0M396.6 460.0L404.2 452.4M401.8 445.1L409.4 452.7M401.8 452.7L409.4 445.1M412.2 439.5L419.8 447.1M412.2 447.1L419.8 439.5M425.2 435.8L432.8 443.4M425.2 443.4L432.8 435.8M430.4 433.9L438.0 441.5M430.4 441.5L438.0 433.9M439.1 427.0L446.7 434.6M439.1 434.6L446.7 427.0M449.7 418.0L457.3 425.6M449.7 425.6L457.3 418.0M461.0 414.1L468.6 421.7M461.0 421.7L468.6 414.1M473.0 408.6L480.6 416.2M473.0 416.2L480.6 408.6M477.3 402.5L484.9 410.1M477.3 410.1L484.9 402.5M361.8 401.2L369.4 408.8M361.8 408.8L369.4 401.2M367.8 396.2L375.4 403.8M367.8 403.8L375.4 396.2M373.1 394.7L380.7 402.3M373.1 402.3L380.7 394.7M381.0 393.0L388.6 400.6M381.0 400.6L388.6 393.0M393.4 393.9L401.0 401.5M393.4 401.5L401.0 393.9M405.4 387.8L413.0 395.4M405.4 395.4L413.0 387.8M411.7 390.0L419.3 397.6M411.7 397.6L419.3 390.0M422.2 387.0L429.8 394.6M422.2 394.6L429.8 387.0M435.2 382.9L442.8 390.5M435.2 390.5L442.8 382.9M445.8 376.7L453.4 384.3M445.8 384.3L453.4 376.7M458.6 373.8L466.2 381.4M458.6 381.4L466.2 373.8M466.0 375.3L473.6 382.9M466.0 382.9L473.6 375.3M354.2 342.5L361.8 350.1M354.2 350.1L361.8 342.5M361.2 342.5L368.8 350.1M361.2 350.1L368.8 342.5M366.7 342.5L374.3 350.1M366.7 350.1L374.3 342.5M374.8 342.5L382.4 350.1M374.8 350.1L382.4 342.5M386.6 342.5L394.2 350.1M386.6 350.1L394.2 342.5M399.7 342.5L407.3 350.1M399.7 350.1L407.3 342.5M405.2 342.5L412.8 350.1M405.2 350.1L412.8 342.5M416.2 342.5L423.8 350.1M416.2 350.1L423.8 342.5M429.8 342.5L437.4 350.1M429.8 350.1L437.4 342.5M441.6 342.5L449.2 350.1M441.6 350.1L449.2 342.5M454.7 342.5L462.3 350.1M454.7 350.1L462.3 342.5M461.5 342.5L469.1 350.1M461.5 350.1L469.1 342.5M361.7 284.5L369.3 292.1M361.7 292.1L369.3 284.5M368.5 286.2L376.1 293.8M368.5 293.8L376.1 286.2M373.8 287.6L381.4 295.2M373.8 295.2L381.4 287.6M381.7 289.4L389.3 297.0M381.7 297.0L389.3 289.4M393.1 292.5L400.7 300.1M393.1 300.1L400.7 292.5M405.4 297.2L413.0 304.8M405.4 304.8L413.0 297.2M411.4 295.9L419.0 303.5M411.4 303.5L419.0 295.9M422.4 297.2L430.0 304.8M422.4 304.8L430.0 297.2M435.1 302.5L442.7 310.1M435.1 310.1L442.7 302.5M447.0 303.9L454.6 311.5M447.0 311.5L454.6 303.9M459.2 308.9L466.8 316.5M459.2 316.5L466.8 308.9M465.2 312.5L472.8 320.1M465.2 320.1L472.8 312.5M386.2 225.8L393.8 233.4M386.2 233.4L393.8 225.8M392.8 228.3L400.4 235.9M392.8 235.9L400.4 228.3M394.7 235.9L402.3 243.5M394.7 243.5L402.3 235.9M400.7 241.8L408.3 249.4M400.7 249.4L408.3 241.8M413.0 244.0L420.6 251.6M413.0 251.6L420.6 244.0M424.5 250.4L432.1 258.0M424.5 258.0L432.1 250.4M429.3 253.0L436.9 260.6M429.3 260.6L436.9 253.0M440.3 256.1L447.9 263.7M440.3 263.7L447.9 256.1M450.9 264.9L458.5 272.5M450.9 272.5L458.5 264.9M461.5 270.0L469.1 277.6M461.5 277.6L469.1 270.0M470.8 280.2L478.4 287.8M470.8 287.8L478.4 280.2M478.0 281.3L485.6 288.9M478.0 288.9L485.6 281.3M423.3 178.5L430.9 186.1M423.3 186.1L430.9 178.5M423.6 188.1L431.2 195.7M423.6 195.7L431.2 188.1M427.5 192.0L435.1 199.6M427.5 199.6L435.1 192.0M437.4 193.5L445.0 201.1M437.4 201.1L445.0 193.5M446.6 201.0L454.2 208.6M446.6 208.6L454.2 201.0M451.3 214.9L458.9 222.5M451.3 222.5L458.9 214.9M458.1 215.8L465.7 223.4M458.1 223.4L465.7 215.8M463.4 226.0L471.0 233.6M463.4 233.6L471.0 226.0M475.9 232.8L483.5 240.4M475.9 240.4L483.5 232.8M483.8 241.6L491.4 249.2M483.8 249.2L491.4 241.6M491.4 252.5L499.0 260.1M491.4 260.1L499.0 252.5M496.2 257.3L503.8 264.9M496.2 264.9L503.8 257.3M471.0 142.7L478.6 150.3M471.0 150.3L478.6 142.7M472.5 150.0L480.1 157.6M472.5 157.6L480.1 150.0M477.1 153.6L484.7 161.2M477.1 161.2L484.7 153.6M478.3 162.3L485.9 169.9M478.3 169.9L485.9 162.3M483.8 172.7L491.4 180.3M483.8 180.3L491.4 172.7M494.7 181.6L502.3 189.2M494.7 189.2L502.3 181.6M495.4 187.5L503.0 195.1M495.4 195.1L503.0 187.5M499.8 197.7L507.4 205.3M499.8 205.3L507.4 197.7M506.8 209.4L514.4 217.0M506.8 217.0L514.4 209.4M513.6 219.0L521.2 226.6M513.6 226.6L521.2 219.0M520.0 230.5L527.6 238.1M520.0 238.1L527.6 230.5M524.3 235.9L531.9 243.5M524.3 243.5L531.9 235.9M523.3 121.3L530.9 128.9M523.3 128.9L530.9 121.3M528.8 127.1L536.4 134.7M528.8 134.7L536.4 127.1M528.8 132.8L536.4 140.4M528.8 140.4L536.4 132.8M532.4 140.2L540.0 147.8M532.4 147.8L540.0 140.2M534.9 151.8L542.5 159.4M534.9 159.4L542.5 151.8M538.3 164.4L545.9 172.0M538.3 172.0L545.9 164.4M540.1 169.6L547.7 177.2M540.1 177.2L547.7 169.6M543.2 180.2L550.8 187.8M543.2 187.8L550.8 180.2M544.5 193.9L552.1 201.5M544.5 201.5L552.1 193.9M546.8 205.5L554.4 213.1M546.8 213.1L554.4 205.5M551.2 217.9L558.8 225.5M551.2 225.5L558.8 217.9M553.3 224.4L560.9 232.0M553.3 232.0L560.9 224.4" stroke="#ff1a1a" stroke-width="1"/>
</g></svg>

<!-- selection box -->
<svg width="1200" height="675" class="a" style="left:0;top:0">
<rect x="353.5" y="112" width="467.7" height="468.7" fill="none" stroke="#ffff00" stroke-width="1" stroke-dasharray="7.5 6.5" stroke-dashoffset="-3.5"/>
<g fill="#fff">
<rect x="345" y="103.5" width="6.3" height="6.3"/><rect x="584" y="103.5" width="6.3" height="6.3"/><rect x="824" y="103.5" width="6.3" height="6.3"/>
<rect x="345" y="344" width="6.3" height="6.3"/><rect x="824" y="344" width="6.3" height="6.3"/>
<rect x="345" y="583" width="6.3" height="6.3"/><rect x="584" y="583" width="6.3" height="6.3"/><rect x="824" y="583" width="6.3" height="6.3"/>
</g>
<g font-family="Liberation Sans" font-size="11" fill="#e8e8e8">
<text x="570.5" y="98.8">1024.0</text>
<text x="308.5" y="350.3">1024.0</text>
</g>
</svg>

<!-- Selection Mode panel -->
<div class="a" style="left:1066px;top:61px;width:130px;height:113px;background:#f0f0f0;border:1px solid #d4d4d4;box-shadow:0 0 3px rgba(0,0,0,.25)"></div>
<div class="a" style="left:1067px;top:62px;width:128px;height:23px;background:#fff"></div>
<div class="t" style="left:1073px;top:70.5px;font-size:10.4px;color:#a0a0a0">Selection Mode</div>
<div class="xb" style="left:1179px;top:68px;width:16px;height:16px"></div>
<div class="t" style="left:1184px;top:70px;font-size:10px;color:#f4f4f4">×</div>
<div class="a" style="left:1180px;top:131px;width:10px;height:14px;border:1px solid #9a9a9a;border-left:none;border-top:none;background:#e6e6e6"></div>
<div class="a" style="left:1180px;top:152px;width:10px;height:14px;border:1px solid #9a9a9a;border-left:none;border-top:none;background:#e6e6e6"></div>

<!-- Textures panel -->
<div class="a" style="left:1057px;top:231px;width:132px;height:171px;background:#f0f0f0;border:1px solid #fafafa;box-shadow:0 0 2px rgba(0,0,0,.3)"></div>
<div class="a" style="left:1056px;top:85px;width:130px;height:147px;background:#f0f0f0;border:1px solid #d0d0d0;box-shadow:0 0 3px rgba(0,0,0,.25)"></div>
<div class="a" style="left:1057px;top:86px;width:128px;height:26px;background:#fff"></div>
<div class="t" style="left:1063px;top:94px;font-size:10px;color:#a0a0a0">Textures</div>
<div class="xb" style="left:1168px;top:91px;width:17px;height:17px"></div>
<div class="t" style="left:1173px;top:94px;font-size:10px;color:#f4f4f4">×</div>
<div class="t" style="left:1059px;top:114px;font-size:9.3px;color:#111">Texture group:</div>
<div class="a" style="left:1063px;top:126px;width:120px;height:20px;background:#fff;border:1px solid #7a7a7a"></div>
<div class="t" style="left:1066px;top:130px;font-size:9.5px;color:#111">All Textures</div>
<div class="a" style="left:1165px;top:127px;width:17px;height:18px;background:#e6e6e6"></div>
<svg class="a" style="left:1170px;top:133px" width="8" height="5"><path d="M0 0H8L4 5Z" fill="#111"/></svg>
<div class="a" style="left:1178px;top:206px;width:5px;height:20px;border:1px solid #9a9a9a;border-left:none;background:#e6e6e6"></div>
<div class="a" style="left:1178px;top:232px;width:5px;height:21px;border:1px solid #9a9a9a;border-left:none;background:#e6e6e6"></div>
<div class="a" style="left:1178px;top:260px;width:6px;height:20px;border:1px solid #9a9a9a;border-left:none;background:#e6e6e6"></div>
<div class="a" style="left:1178px;top:300px;width:5px;height:15px;border:1px solid #9a9a9a;border-left:none;background:#e6e6e6"></div>
<div class="a" style="left:1178px;top:334px;width:5px;height:19px;border:1px solid #9a9a9a;border-left:none;background:#e6e6e6"></div>
<div class="a" style="left:1096px;top:358px;width:30px;height:19px;background:#fff;border-top:1px solid #a0a0a0;border-left:1px solid #a0a0a0"></div>
<div class="t" style="left:1099px;top:361px;font-size:10px;color:#111">16</div>
<div class="btn" style="left:1127px;top:358px;width:13px;height:9px;background:#ececec;border-color:#c0c0c0"></div>
<div class="btn" style="left:1127px;top:367px;width:13px;height:10px;background:#ececec;border-color:#c0c0c0"></div>
<div class="btn" style="left:1076px;top:381px;width:94px;height:19px;background:#ececec;border-color:#b0b0b0"></div>
<svg class="a" style="left:1127px;top:358px" width="13" height="19"><path d="M5 5.5H8L6.5 4Z" fill="#222"/><path d="M5 13.5H8L6.5 15Z" fill="#222"/></svg>
<div class="t" style="left:1095px;top:385px;font-size:10px;color:#111">Create Prefab</div>

<!-- Filter Control panel -->
<div class="a" style="left:1047px;top:138px;width:131px;height:219px;background:#f0f0f0;border:1px solid #d0d0d0;box-shadow:0 0 4px rgba(0,0,0,.3)"></div>
<div class="a" style="left:1048px;top:139px;width:129px;height:25px;background:#fff"></div>
<div class="t" style="left:1054.5px;top:147px;font-size:10.4px;color:#a0a0a0">Filter Control</div>
<div class="xb" style="left:1160.5px;top:144px;width:16.5px;height:16.5px"></div>
<div class="t" style="left:1166px;top:147px;font-size:10px;color:#f4f4f4">×</div>
<div class="t" style="left:1051px;top:167px;font-size:10px;color:#111">VisGroups:</div>
<div class="a" style="left:1053px;top:199px;width:122px;height:137px;background:#ececec;border:1px solid #7a7a7a;border-top-color:#7a7a7a"></div>
<div class="a" style="left:1054px;top:200px;width:116px;height:132px;background:#fff"></div>
<div class="a" style="left:1051px;top:179px;width:39px;height:20px;background:#f0f0f0;border-top:1px solid #fff;border-left:1px solid #fff;border-right:1px solid #8a8a8a;border-top-left-radius:2px"></div>
<div class="t" style="left:1057px;top:182px;font-size:10px;color:#111">User</div>
<div class="a" style="left:1090px;top:182px;width:35px;height:17px;background:#f0f0f0;border-top:1px solid #fff;border-right:1px solid #8a8a8a"></div>
<div class="t" style="left:1093px;top:184px;font-size:10px;color:#111">Auto</div>
<div class="btn" style="left:1047px;top:340px;width:31px;height:16px;background:#ececec;border-color:#b8b8b8"></div>
<div class="t" style="left:1050px;top:343px;font-size:10px;color:#111">Show</div>
<div class="btn" style="left:1080px;top:340px;width:31px;height:16px;background:#ececec;border-color:#b8b8b8"></div>
<div class="t" style="left:1087px;top:343px;font-size:10px;color:#111">Edit</div>
<div class="btn" style="left:1113px;top:340px;width:31px;height:16px;background:#ececec;border-color:#b8b8b8"></div>
<div class="t" style="left:1118px;top:343px;font-size:10px;color:#111">Mark</div>
<div class="btn" style="left:1146px;top:340px;width:16px;height:16px;background:#ececec;border-color:#b8b8b8"></div>
<div class="btn" style="left:1162px;top:340px;width:16px;height:16px;background:#ececec;border-color:#b8b8b8"></div>
<svg class="a" style="left:1149px;top:342px" width="12" height="12"><path d="M6 1L10.5 6H7.7V11H4.3V6H1.5Z" fill="#111"/></svg>
<svg class="a" style="left:1165px;top:342px" width="12" height="12"><path d="M6 11L10.5 6H7.7V1H4.3V6H1.5Z" fill="#111"/></svg>

<!-- Transformation dialog -->
<div class="a" style="left:105px;top:287px;width:190px;height:162px;background:#f0f0f0;border:1px solid #b4b4b4;box-shadow:0 0 4px rgba(0,0,0,.3)"></div>
<div class="a" style="left:106px;top:288px;width:188px;height:21px;background:#fff"></div>
<div class="t" style="left:108.5px;top:292px;font-size:10.8px;color:#111">Transformation</div>
<svg class="a" style="left:277px;top:294px" width="10" height="10"><path d="M0.5 0.5L9.5 9.5M9.5 0.5L0.5 9.5" stroke="#222" stroke-width="1.1"/></svg>
<div class="t" style="left:115.5px;top:320px;font-size:9.4px;color:#111">Mode:</div>
<div class="t" style="left:186px;top:320px;font-size:9.4px;color:#111">Values:</div>
<div class="t" style="left:131px;top:341px;font-size:9.4px;color:#111">Rotate</div>
<div class="t" style="left:131px;top:366px;font-size:9.4px;color:#111">Scale</div>
<div class="t" style="left:131px;top:389px;font-size:9.4px;color:#111">Move</div>
<svg class="a" style="left:115px;top:339px" width="12" height="60">
<circle cx="6" cy="6" r="4.5" fill="#fff" stroke="#9a9a9a"/><circle cx="6" cy="6" r="2" fill="#111"/>
<circle cx="6" cy="31" r="4.5" fill="#fff" stroke="#9a9a9a"/>
<circle cx="6" cy="55" r="4.5" fill="#fff" stroke="#9a9a9a"/>
</svg>
<div class="t" style="left:188px;top:341px;font-size:9.4px;color:#111">X:</div>
<div class="t" style="left:188px;top:365px;font-size:9.4px;color:#111">Y:</div>
<div class="t" style="left:188px;top:389px;font-size:9.4px;color:#111">Z:</div>
<div class="a" style="left:202px;top:337px;width:52px;height:19px;background:#fff;border-top:1px solid #9a9a9a;border-left:1px solid #9a9a9a;border-right:1px solid #e8e8e8;border-bottom:1px solid #e8e8e8"></div>
<div class="a" style="left:202px;top:361px;width:52px;height:19px;background:#fff;border-top:1px solid #9a9a9a;border-left:1px solid #9a9a9a;border-right:1px solid #e8e8e8;border-bottom:1px solid #e8e8e8"></div>
<div class="a" style="left:202px;top:385px;width:52px;height:19px;background:#fff;border-top:1px solid #9a9a9a;border-left:1px solid #9a9a9a;border-right:1px solid #e8e8e8;border-bottom:1px solid #e8e8e8"></div>
<div class="t" style="left:204.5px;top:341px;font-size:9.4px;color:#111">0</div>
<div class="t" style="left:204.5px;top:365px;font-size:9.4px;color:#111">0</div>
<div class="t" style="left:204.5px;top:389px;font-size:9.4px;color:#111">7.5</div>
<div class="a" style="left:216.5px;top:388px;width:1px;height:13px;background:#111"></div>
<div class="btn" style="left:149px;top:421px;width:66px;height:20px;background:#e6e6e6;border-color:#a8a8a8"></div>
<div class="t" style="left:175px;top:426px;font-size:9.4px;color:#111">OK</div>
<div class="btn" style="left:220px;top:421px;width:67px;height:20px;background:#e6e6e6;border-color:#a8a8a8"></div>
<div class="t" style="left:239px;top:426px;font-size:9.4px;color:#111">Cancel</div>

<div class="a" style="left:115.5px;top:330px;width:8px;height:1px;background:#111"></div>
<div class="a" style="left:186px;top:330px;width:6px;height:1px;background:#111"></div>
<div class="a" style="left:131px;top:351px;width:6px;height:1px;background:#111"></div>
<div class="a" style="left:131px;top:376px;width:6px;height:1px;background:#111"></div>
<div class="a" style="left:131px;top:399px;width:8px;height:1px;background:#111"></div>
<div class="a" style="left:188px;top:351px;width:6px;height:1px;background:#111"></div>
<div class="a" style="left:188px;top:375px;width:6px;height:1px;background:#111"></div>
<div class="a" style="left:188px;top:399px;width:6px;height:1px;background:#111"></div>
<div class="a" style="left:1050px;top:353px;width:6px;height:1px;background:#111"></div>
<div class="a" style="left:1087px;top:353px;width:6px;height:1px;background:#111"></div>
<div class="a" style="left:1118px;top:353px;width:8px;height:1px;background:#111"></div>
<div class="a" style="left:1095px;top:395px;width:7px;height:1px;background:#111"></div>

<!-- status -->
<div class="a" style="left:0;top:657px;width:1200px;height:1px;background:#a8a8a8"></div>
<div class="a" style="left:0;top:660px;width:1200px;height:1px;background:#a8a8a8"></div>
<div class="a" style="left:0;top:673px;width:1200px;height:2px;background:#383838"></div>
<div class="sb" style="left:0;width:414px;border-left:none">For Help, press F1</div>
<div class="sb" style="left:417px;width:268px">216 objects selected.</div>
<div class="sb" style="left:688px;width:92px">@9528, 4893</div>
<div class="sb" style="left:784px;width:161px;font-size:9.75px">1024w 1024l 256h @(9344 4736 128</div>
<div class="sb" style="left:948px;width:74px">Zoom: 0.52</div>
<div class="sb" style="left:1026px;width:122px">Snap: On Grid: 128</div>
<div class="sb" style="left:1151px;width:49px">&lt;-&gt;</div>
</body></html>
